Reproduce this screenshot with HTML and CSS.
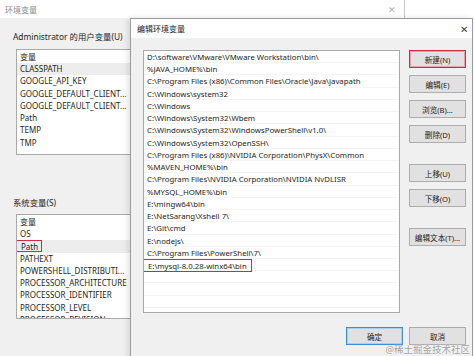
FILE: index.html
```html
<!DOCTYPE html>
<html lang="zh-CN">
<head>
  <meta charset="UTF-8" />
  <title>编辑环境变量</title>
  <link rel="stylesheet" href="styles.css">
</head>
<body>

  <!-- Back window: 环境变量 -->
  <div class="env-window">
    <div class="titlebar">
      <span class="title">环境变量</span>
      <span class="close">✕</span>
    </div>
    <div class="env-body">
      <div class="group-label">Administrator 的用户变量(U)</div>
      <div class="var-list user-list">
        <div class="row">变量</div>
        <div class="row sel">CLASSPATH</div>
        <div class="row">GOOGLE_API_KEY</div>
        <div class="row">GOOGLE_DEFAULT_CLIENT...</div>
        <div class="row">GOOGLE_DEFAULT_CLIENT...</div>
        <div class="row">Path</div>
        <div class="row">TEMP</div>
        <div class="row">TMP</div>
      </div>

      <div class="group-label sys-label">系统变量(S)</div>
      <div class="var-list sys-list">
        <div class="row">变量</div>
        <div class="row">OS</div>
        <div class="row sel"><span class="mark">Path</span></div>
        <div class="row">PATHEXT</div>
        <div class="row">POWERSHELL_DISTRIBUTI...</div>
        <div class="row">PROCESSOR_ARCHITECTURE</div>
        <div class="row">PROCESSOR_IDENTIFIER</div>
        <div class="row">PROCESSOR_LEVEL</div>
        <div class="row">PROCESSOR_REVISION</div>
      </div>
    </div>
  </div>

  <!-- Front dialog: 编辑环境变量 -->
  <div class="edit-dialog">
    <div class="dlg-titlebar">
      <span class="title">编辑环境变量</span>
      <span class="close">✕</span>
    </div>
    <div class="dlg-body">
      <div class="dlg-main">
        <div class="path-list">
          <div class="prow">D:\software\VMware\VMware Workstation\bin\</div>
          <div class="prow">%JAVA_HOME%\bin</div>
          <div class="prow">C:\Program Files (x86)\Common Files\Oracle\Java\javapath</div>
          <div class="prow">C:\Windows\system32</div>
          <div class="prow">C:\Windows</div>
          <div class="prow">C:\Windows\System32\Wbem</div>
          <div class="prow">C:\Windows\System32\WindowsPowerShell\v1.0\</div>
          <div class="prow">C:\Windows\System32\OpenSSH\</div>
          <div class="prow">C:\Program Files (x86)\NVIDIA Corporation\PhysX\Common</div>
          <div class="prow">%MAVEN_HOME%\bin</div>
          <div class="prow">C:\Program Files\NVIDIA Corporation\NVIDIA NvDLISR</div>
          <div class="prow">%MYSQL_HOME%\bin</div>
          <div class="prow">E:\mingw64\bin</div>
          <div class="prow">E:\NetSarang\Xshell 7\</div>
          <div class="prow">E:\Git\cmd</div>
          <div class="prow">E:\nodejs\</div>
          <div class="prow">C:\Program Files\PowerShell\7\</div>
          <div class="prow"><span class="mark">E:\mysql-8.0.28-winx64\bin</span></div>
          <div class="prow"></div>
          <div class="prow"></div>
          <div class="prow"></div>
          <div class="prow"></div>
        </div>

        <div class="btn-col">
          <button class="btn marked">新建(N)</button>
          <button class="btn">编辑(E)</button>
          <button class="btn">浏览(B)...</button>
          <button class="btn">删除(D)</button>
          <button class="btn spaced">上移(U)</button>
          <button class="btn">下移(O)</button>
          <button class="btn spaced">编辑文本(T)...</button>
        </div>
      </div>

      <div class="dlg-footer">
        <button class="btn default">确定</button>
        <button class="btn">取消</button>
      </div>
    </div>
  </div>

  <div class="watermark">@稀土掘金技术社区</div>

</body>
</html>
```

FILE: styles.css
```css
body {
  margin: 0;
  width: 474px;
  height: 356px;
  overflow: hidden;
  position: relative;
  background: #fff;
  font-family: 'Noto Sans', 'Noto Sans CJK SC', sans-serif;
  font-size: 8px;
  color: #1e1e1e;
}

/* back window */

.env-window {
  width: 404px;
  height: 356px;
  background: #f0f0f0;
  border-right: 1px solid #c8c8c8;
}

.titlebar {
  height: 18px;
  background: #fff;
  display: flex;
  align-items: center;
  justify-content: space-between;
  padding: 0 8px 0 5px;
}

.titlebar .title {
  color: #8a8a8a;
  font-size: 8px;
}

.titlebar .close {
  color: #b0b0b0;
  font-size: 9px;
}

.env-body {
  padding: 13px 0 0 13px;
}

.group-label {
  height: 12px;
  line-height: 12px;
  font-size: 8.4px;
}

.sys-label {
  margin-top: 42px;
}

.var-list {
  width: 150px;
  margin: 6px 0 0 3px;
  background: #fff;
  border: 1px solid #a9a9a9;
  padding-top: 1px;
  box-sizing: border-box;
  overflow: hidden;
}

.user-list {
  height: 106px;
}

.sys-list {
  height: 105px;
  margin-top: 5px;
}

.row {
  height: 12.24px;
  line-height: 12.24px;
  padding-left: 3px;
  white-space: nowrap;
}

.row.sel {
  background: #ededed;
}

.mark {
  display: inline-block;
  margin-left: -4px;
  padding: 0 3px 0 4px;
  height: 12px;
  line-height: 11px;
  box-sizing: border-box;
  border: 1px solid #c9303e;
}

/* front dialog */

.edit-dialog {
  position: absolute;
  left: 130px;
  top: 18px;
  width: 343px;
  height: 350px;
  box-sizing: border-box;
  border: 1px solid #9c9c9c;
  background: #f0f0f0;
  box-shadow: -2px 0 6px rgba(0, 0, 0, 0.12);
}

.dlg-titlebar {
  height: 19px;
  background: #fff;
  display: flex;
  align-items: center;
  justify-content: space-between;
  padding: 0 4px 0 6px;
}

.dlg-titlebar .title {
  font-size: 8px;
  color: #222;
}

.dlg-titlebar .close {
  font-size: 10px;
  color: #444;
}

.dlg-body {
  padding: 12px 6px 0 12px;
}

.dlg-main {
  display: flex;
  gap: 9px;
}

.path-list {
  width: 257px;
  height: 263px;
  box-sizing: border-box;
  border: 1px solid #a9a9a9;
  background: #fff;
  overflow: hidden;
  font-size: 7.8px;
}

.prow {
  height: 12.24px;
  line-height: 12.24px;
  padding-left: 3px;
  box-sizing: border-box;
  border-bottom: 1px solid #f4f4f4;
  white-space: nowrap;
}

.prow .mark {
  height: 13px;
  line-height: 12px;
  padding-right: 4px;
}

.btn-col {
  display: flex;
  flex-direction: column;
  gap: 7px;
}

.btn {
  width: 57px;
  height: 18px;
  padding: 0;
  border: 1px solid #adadad;
  background: #e1e1e1;
  font-family: 'Noto Sans', 'Noto Sans CJK SC', sans-serif;
  font-size: 7.6px;
  color: #1e1e1e;
}

.btn.spaced {
  margin-top: 14px;
}

.btn.marked {
  border-color: #c9303e;
  box-shadow: inset 0 0 0 1px #e8a0a8;
}

.btn.default {
  border-color: #3b8fd6;
  box-shadow: inset 0 0 0 1px #a9d0f0;
}

.dlg-footer {
  display: flex;
  justify-content: flex-end;
  gap: 6px;
  margin-top: 14px;
}

.watermark {
  position: absolute;
  right: 4px;
  bottom: 0;
  font-size: 9.5px;
  color: #a0a0a0;
  text-shadow: 0 0 1px #fff, 0 0 1px #fff;
}
```
